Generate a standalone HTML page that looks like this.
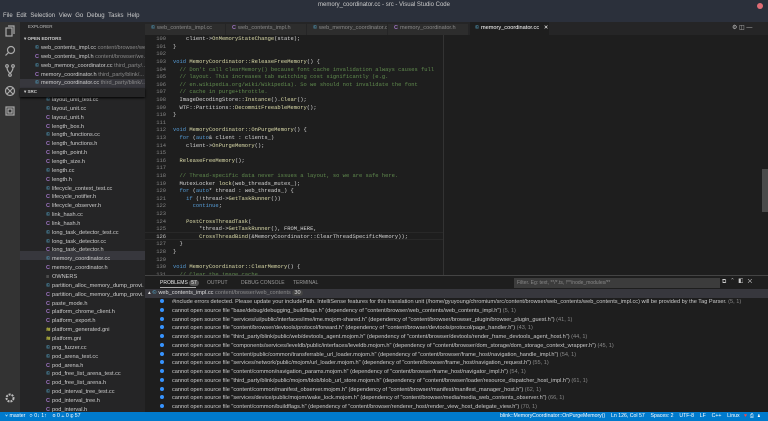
<!DOCTYPE html>
<html><head><meta charset="utf-8"><style>
*{margin:0;padding:0;box-sizing:border-box}
body{width:768px;height:421px;overflow:hidden;background:#1e1e1e;font-family:"Liberation Sans",sans-serif;position:relative;color:#ccc}
.a{position:absolute;white-space:nowrap}
.t{font-size:5.6px;line-height:8.85px}
.c{font-family:"Liberation Mono",monospace;font-size:5.45px;line-height:7.6px;color:#d4d4d4;white-space:pre}
.k{color:#569cd6}.g{color:#608b4e}.f{color:#dcdcaa}
.ln{color:#858585;text-align:right;width:20px}
.ic{display:inline-block;width:6px;font-weight:bold;font-size:5.5px}
.cc{color:#519aba}.hh{color:#a074c4}.gn{color:#cbcb41}
.dot{display:inline-block;width:4px;height:4px;border-radius:50%;background:#3794ff;margin-right:8px;vertical-align:0}
.g2{color:#8a8a8a}
.clip{overflow:hidden}
</style></head><body>
<!-- title bar -->
<div class="a" style="left:0;top:0;width:768px;height:22px;background:#2b303b"></div>
<div class="a t" style="left:0;top:1px;width:768px;text-align:center;color:#ccc;font-size:6px">memory_coordinator.cc - src - Visual Studio Code</div>
<div class="a" style="left:757px;top:3px;width:6px;height:6px;border-radius:50%;background:#e06c75"></div>
<div class="a t" style="left:3px;top:12px;color:#ccc;font-size:6px;word-spacing:2px">File Edit Selection View Go Debug Tasks Help</div>
<!-- activity bar -->
<div class="a" style="left:0;top:22px;width:20px;height:390px;background:#333"></div>
<svg class="a" style="left:0;top:22px" width="20" height="100" viewBox="0 0 20 100" fill="none" stroke="#aaa" stroke-width="1.2">
<rect x="6" y="6" width="6" height="8"/><path d="M8 4h6v8"/>
<circle cx="11" cy="28" r="3.5"/><path d="M8.5 30.5l-3 3"/>
<circle cx="7" cy="44" r="1.3"/><circle cx="13" cy="44" r="1.3"/><circle cx="10" cy="53" r="1.3"/><path d="M7 45.5q0 3 3 6M13 45.5q0 3-3 6"/>
<circle cx="10" cy="69" r="4.5"/><path d="M7 66l6 6M13 66l-6 6"/>
<rect x="6" y="85" width="8" height="8"/><rect x="8" y="87" width="4" height="4"/>
</svg>
<svg class="a" style="left:4px;top:392px" width="12" height="12" viewBox="0 0 12 12"><circle cx="6" cy="6" r="3.5" fill="none" stroke="#bbb" stroke-width="2" stroke-dasharray="2 1"/></svg>
<!-- sidebar -->
<div class="a" style="left:20px;top:22px;width:125px;height:390px;background:#252526"></div>
<div class="a t" style="left:28px;top:23px;font-size:4.5px;color:#bbb">EXPLORER</div>
<div class="a t" style="left:24px;top:35px;font-size:4.5px;font-weight:bold;color:#ccc">▾ OPEN EDITORS</div>
<div class="a" style="left:20px;top:79px;width:125px;height:9px;background:#37373d"></div>
<div class="a t clip" style="left:35px;top:44px;width:110px"><span class="ic cc">©</span>web_contents_impl.cc <span class="g2">content/browser/we...</span></div>
<div class="a t clip" style="left:35px;top:53px;width:110px"><span class="ic hh">C</span>web_contents_impl.h <span class="g2">content/browser/we...</span></div>
<div class="a t clip" style="left:35px;top:62px;width:110px"><span class="ic cc">©</span>web_memory_coordinator.cc <span class="g2">third_party/...</span></div>
<div class="a t clip" style="left:35px;top:71px;width:110px"><span class="ic hh">C</span>memory_coordinator.h <span class="g2">third_party/blink/...</span></div>
<div class="a t clip" style="left:35px;top:79px;width:110px"><span class="ic cc">©</span>memory_coordinator.cc <span class="g2">third_party/blink/...</span></div>
<div class="a" style="left:20px;top:251px;width:125px;height:9px;background:#37373d"></div>
<div id="files"></div>
<div class="a" style="left:20px;top:88px;width:125px;height:9px;background:#252526;box-shadow:0 1px 2px #000"></div>
<div class="a t" style="left:24px;top:88px;font-size:4.5px;font-weight:bold;color:#ccc">▾ SRC</div>
<!-- tabs -->
<div class="a" style="left:145px;top:22px;width:623px;height:13px;background:#252526"></div>
<div class="a t clip" style="left:145px;top:24px;width:80px;height:11px;background:#2d2d2d;padding-left:6px"><span class="ic cc">©</span><span class="g2">web_contents_impl.cc</span></div>
<div class="a t clip" style="left:226px;top:24px;width:80px;height:11px;background:#2d2d2d;padding-left:6px"><span class="ic hh">C</span><span class="g2">web_contents_impl.h</span></div>
<div class="a t clip" style="left:307px;top:24px;width:80px;height:11px;background:#2d2d2d;padding-left:6px"><span class="ic cc">©</span><span class="g2">web_memory_coordinator.cc</span></div>
<div class="a t clip" style="left:388px;top:24px;width:80px;height:11px;background:#2d2d2d;padding-left:6px"><span class="ic hh">C</span><span class="g2">memory_coordinator.h</span></div>
<div class="a t" style="left:470px;top:22px;width:79px;height:13px;background:#1e1e1e;padding:2px 0 0 5px;color:#fff"><span class="ic cc">©</span>memory_coordinator.cc <span style="margin-left:3px">✕</span></div>
<div class="a t" style="left:732px;top:24px;color:#bbb;font-size:6px">⚙ ◫ —</div>
<!-- editor -->
<div class="a" style="left:443px;top:35px;width:1px;height:241px;background:#333"></div>
<div class="a" style="left:762px;top:169px;width:6px;height:43px;background:#4a4a4a"></div>
<div class="a" style="left:145px;top:232px;width:298px;height:8px;border-top:1px solid #282828;border-bottom:1px solid #282828"></div>
<div id="code"></div>
<!-- panel -->
<div class="a" style="left:145px;top:275px;width:623px;height:137px;background:#1e1e1e;border-top:1px solid #444"></div>
<div class="a t" style="left:160px;top:279px;font-size:5px;color:#e7e7e7">PROBLEMS <span style="background:#555;border-radius:3px;padding:0 2px">57</span></div>
<div class="a" style="left:160px;top:287px;width:36px;height:1px;background:#aaa"></div>
<div class="a t" style="left:207px;top:279px;font-size:5px;color:#999">OUTPUT</div>
<div class="a t" style="left:241px;top:279px;font-size:5px;color:#999">DEBUG CONSOLE</div>
<div class="a t" style="left:293px;top:279px;font-size:5px;color:#999">TERMINAL</div>
<div class="a t" style="left:514px;top:278px;width:206px;height:10px;background:#3c3c3c;padding-left:3px;line-height:10px;font-size:5px;color:#888">Filter. Eg: text, **/*.ts, !**/node_modules/**</div>
<div class="a t" style="left:722px;top:278px;color:#ccc;font-size:6px;word-spacing:3px">⧉ ⌃ ◧ ✕</div>
<div class="a" style="left:145px;top:289px;width:623px;height:9px;background:#37373d"></div>
<div class="a t" style="left:148px;top:289px;color:#ddd">▴ <span class="ic cc">©</span>web_contents_impl.cc <span class="g2">content/browser/web_contents</span> <span style="background:#444;border-radius:3px;padding:0 2px">30</span></div>
<div class="a clip" style="left:145px;top:298px;width:623px;height:114px"><div id="probs" style="position:relative;left:-145px;top:-298px"></div></div>
<!-- status bar -->
<div class="a t" style="left:0;top:412px;width:768px;height:9px;background:#007acc;color:#fff;line-height:9px;font-size:5.2px;padding-left:5px">⑂ master &nbsp; ⟳ 0↓ 1↑ &nbsp;&nbsp; ⊗ 0 ⚠ 0 ⓘ 57</div>
<div class="a t" style="left:500px;top:412px;line-height:9px;color:#fff;font-size:5.2px">blink::MemoryCoordinator::OnPurgeMemory()&nbsp;&nbsp;&nbsp; Ln 126, Col 57 &nbsp;&nbsp; Spaces: 2 &nbsp;&nbsp; UTF-8 &nbsp;&nbsp; LF &nbsp;&nbsp; C++ &nbsp;&nbsp; Linux &nbsp;&nbsp;<span style="color:#f44">♥</span>&nbsp;&nbsp;⎙&nbsp;&nbsp;♟</div>
<script>
var files=[["cc","layout_unit_test.cc"],["cc","layout_unit.cc"],["hh","layout_unit.h"],["hh","length_box.h"],["cc","length_functions.cc"],["hh","length_functions.h"],["hh","length_point.h"],["hh","length_size.h"],["cc","length.cc"],["hh","length.h"],["cc","lifecycle_context_test.cc"],["hh","lifecycle_notifier.h"],["hh","lifecycle_observer.h"],["cc","link_hash.cc"],["hh","link_hash.h"],["cc","long_task_detector_test.cc"],["cc","long_task_detector.cc"],["hh","long_task_detector.h"],["cc","memory_coordinator.cc"],["hh","memory_coordinator.h"],["g2","OWNERS"],["cc","partition_alloc_memory_dump_provi..."],["hh","partition_alloc_memory_dump_provi..."],["hh","paste_mode.h"],["hh","platform_chrome_client.h"],["hh","platform_export.h"],["gn","platform_generated.gni"],["gn","platform.gni"],["cc","png_fuzzer.cc"],["cc","pod_arena_test.cc"],["hh","pod_arena.h"],["cc","pod_free_list_arena_test.cc"],["hh","pod_free_list_arena.h"],["cc","pod_interval_tree_test.cc"],["hh","pod_interval_tree.h"],["hh","pod_interval.h"]];
var h="";files.forEach(function(f,i){var ic=f[0]=="cc"?"©":f[0]=="hh"?"C":f[0]=="gn"?"≋":"≡";h+='<div class="a t clip" style="width:98px;left:46px;top:'+(96+i*8.85)+'px;color:#ccc"><span class="ic '+f[0]+'">'+ic+'</span>'+f[1]+'</div>';});
document.getElementById("files").innerHTML=h;
var code=[
'    client-&gt;<span class="f">OnMemoryStateChange</span>(state);',
'}','',
'<span class="k">void</span> <span class="f">MemoryCoordinator::ReleaseFreeMemory</span>() {',
'<span class="g">  // Don\'t call clearMemory() because font cache invalidation always causes full</span>',
'<span class="g">  // layout. This increases tab switching cost significantly (e.g.</span>',
'<span class="g">  // en.wikipedia.org/wiki/Wikipedia). So we should not invalidate the font</span>',
'<span class="g">  // cache in purge+throttle.</span>',
'  ImageDecodingStore::<span class="f">Instance</span>().<span class="f">Clear</span>();',
'  WTF::Partitions::<span class="f">DecommitFreeableMemory</span>();',
'}','',
'<span class="k">void</span> <span class="f">MemoryCoordinator::OnPurgeMemory</span>() {',
'  <span class="k">for</span> (<span class="k">auto</span>&amp; client : clients_)',
'    client-&gt;<span class="f">OnPurgeMemory</span>();','',
'  <span class="f">ReleaseFreeMemory</span>();','',
'<span class="g">  // Thread-specific data never issues a layout, so we are safe here.</span>',
'  MutexLocker <span class="f">lock</span>(web_threads_mutex_);',
'  <span class="k">for</span> (<span class="k">auto</span>* thread : web_threads_) {',
'    <span class="k">if</span> (!thread-&gt;<span class="f">GetTaskRunner</span>())',
'      <span class="k">continue</span>;','',
'    <span class="f">PostCrossThreadTask</span>(',
'        *thread-&gt;<span class="f">GetTaskRunner</span>(), FROM_HERE,',
'        <span class="f">CrossThreadBind</span>(&amp;MemoryCoordinator::ClearThreadSpecificMemory));',
'  }','}','',
'<span class="k">void</span> <span class="f">MemoryCoordinator::ClearMemory</span>() {',
'<span class="g">  // Clear the image cache.</span>'];
h="";code.forEach(function(l,i){var y=35.2+i*7.6;h+='<div class="a c ln" style="left:146px;top:'+y+'px;'+(i==26?'color:#c6c6c6':'')+'">'+(100+i)+'</div><div class="a c" style="left:173px;top:'+y+'px">'+l+'</div>';});
document.getElementById("code").innerHTML=h;
var P=[
['#include errors detected. Please update your includePath. IntelliSense features for this translation unit (/home/gyuyoung/chromium/src/content/browser/web_contents/web_contents_impl.cc) will be provided by the Tag Parser.','(5, 1)'],
['cannot open source file "base/debug/debugging_buildflags.h" (dependency of "content/browser/web_contents/web_contents_impl.h")','(5, 1)'],
['cannot open source file "services/ui/public/interfaces/ime/ime.mojom-shared.h" (dependency of "content/browser/browser_plugin/browser_plugin_guest.h")','(41, 1)'],
['cannot open source file "content/browser/devtools/protocol/forward.h" (dependency of "content/browser/devtools/protocol/page_handler.h")','(43, 1)'],
['cannot open source file "third_party/blink/public/web/devtools_agent.mojom.h" (dependency of "content/browser/devtools/render_frame_devtools_agent_host.h")','(44, 1)'],
['cannot open source file "components/services/leveldb/public/interfaces/leveldb.mojom.h" (dependency of "content/browser/dom_storage/dom_storage_context_wrapper.h")','(45, 1)'],
['cannot open source file "content/public/common/transferrable_url_loader.mojom.h" (dependency of "content/browser/frame_host/navigation_handle_impl.h")','(54, 1)'],
['cannot open source file "services/network/public/mojom/url_loader.mojom.h" (dependency of "content/browser/frame_host/navigation_request.h")','(55, 1)'],
['cannot open source file "content/common/navigation_params.mojom.h" (dependency of "content/browser/frame_host/navigator_impl.h")','(54, 1)'],
['cannot open source file "third_party/blink/public/mojom/blob/blob_url_store.mojom.h" (dependency of "content/browser/loader/resource_dispatcher_host_impl.h")','(61, 1)'],
['cannot open source file "content/common/manifest_observer.mojom.h" (dependency of "content/browser/manifest/manifest_manager_host.h")','(62, 1)'],
['cannot open source file "services/device/public/mojom/wake_lock.mojom.h" (dependency of "content/browser/media/media_web_contents_observer.h")','(66, 1)'],
['cannot open source file "content/common/buildflags.h" (dependency of "content/browser/renderer_host/render_view_host_delegate_view.h")','(70, 1)']];
h="";P.forEach(function(p,i){h+='<div class="a t" style="left:160px;top:'+(298+i*8.75)+'px;color:#ccc"><span class="dot"></span>'+p[0]+' <span class="g2">'+p[1]+'</span></div>';});
document.getElementById("probs").innerHTML=h;
</script>
</body></html>
